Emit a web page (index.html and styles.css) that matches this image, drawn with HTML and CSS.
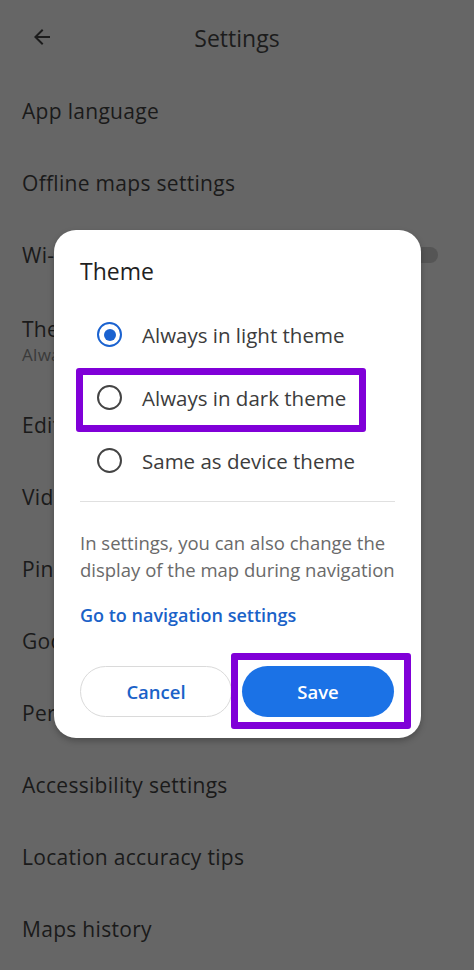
FILE: index.html
```html
<!DOCTYPE html>
<html>
<head>
<meta charset="utf-8">
<link rel="stylesheet" href="styles.css">
</head>
<body>
<div class="screen">
  <header class="topbar">
    <svg class="back" width="24" height="24" viewBox="0 0 24 24"><path d="M20 11H7.83l5.59-5.59L12 4l-8 8 8 8 1.41-1.41L7.83 13H20v-2z" fill="#1c1c1c"/></svg>
    <div class="title">Settings</div>
  </header>
  <ul class="list">
    <li class="row">App language</li>
    <li class="row">Offline maps settings</li>
    <li class="row switch-row"><span>Wi-Fi only</span><span class="track"></span></li>
    <li class="row two"><span>Theme</span><span class="sub">Always in light theme</span></li>
    <li class="row">Edit home or work</li>
    <li class="row">Video settings</li>
    <li class="row">Pinned trips</li>
    <li class="row">Google location settings</li>
    <li class="row">Personal content</li>
    <li class="row">Accessibility settings</li>
    <li class="row">Location accuracy tips</li>
    <li class="row">Maps history</li>
  </ul>

  <div class="dialog">
    <h2 class="d-title">Theme</h2>
    <div class="options">
      <div class="opt"><span class="radio on"></span><span>Always in light theme</span></div>
      <div class="opt"><span class="radio"></span><span>Always in dark theme</span></div>
      <div class="opt"><span class="radio"></span><span>Same as device theme</span></div>
    </div>
    <div class="divider"></div>
    <p class="note">In settings, you can also change the display of the map during navigation</p>
    <div class="link">Go to navigation settings</div>
    <div class="actions">
      <button class="btn cancel">Cancel</button>
      <button class="btn save">Save</button>
    </div>
    <div class="mark mark-dark"></div>
    <div class="mark mark-save"></div>
  </div>
</div>
</body>
</html>
```
FILE: styles.css
```css
* { box-sizing: border-box; }
html, body { margin: 0; padding: 0; }
body {
  background: #666666;
  font-family: "Open Sans", Roboto, "Noto Sans", Arial, sans-serif;
  width: 474px;
  height: 970px;
  overflow: hidden;
}
.screen { position: relative; width: 474px; height: 970px; }
.topbar {
  height: 75px;
  display: flex;
  align-items: center;
  justify-content: center;
  position: relative;
}
.back { position: absolute; left: 30px; top: 25px; }
.title { font-size: 23px; color: #1c1c1c; }
.list { list-style: none; margin: 0; padding: 0; }
.row {
  height: 72px;
  display: flex;
  align-items: center;
  padding-left: 22px;
  font-size: 21px;
  letter-spacing: 0.3px;
  color: #1a1a1a;
}
.switch-row { justify-content: space-between; padding-right: 36px; }
.track { width: 34px; height: 16px; border-radius: 8px; background: #555555; }
.two {
  height: 98px;
  flex-direction: column;
  align-items: flex-start;
  justify-content: center;
  gap: 0;
}
.sub { font-size: 17px; color: #3a3a3a; }

.dialog {
  position: absolute;
  left: 54px;
  top: 230px;
  width: 367px;
  height: 508px;
  background: #fff;
  border-radius: 22px;
  box-shadow: 0 3px 6px rgba(0,0,0,0.25);
  padding: 26px 26px 0 26px;
}
.d-title {
  margin: 0;
  font-weight: 400;
  font-size: 23px;
  color: #1f1f1f;
  line-height: 30px;
}
.options { margin-top: 17px; display: flex; flex-direction: column; }
.opt {
  height: 63px;
  display: flex;
  align-items: center;
  gap: 20px;
  padding-left: 17px;
  font-size: 20.5px;
  color: #3c3c3c;
}
.radio {
  width: 25px; height: 25px;
  border-radius: 50%;
  border: 2.5px solid #444;
  flex: none;
  display: flex;
  align-items: center;
  justify-content: center;
}
.radio.on { border-color: #1a62d0; }
.radio.on::after {
  content: "";
  width: 12px; height: 12px;
  border-radius: 50%;
  background: #1a62d0;
}
.divider { height: 1px; background: #e0e0e0; margin-top: 9px; }
.note {
  margin: 27px 0 0 0;
  font-size: 18.5px;
  line-height: 27px;
  color: #6a6a6a;
}
.link {
  margin-top: 20px;
  font-size: 18px;
  font-weight: 600;
  color: #1a62c8;
}
.actions { display: flex; gap: 10px; margin-top: 39px; }
.btn {
  width: 152px; height: 51px;
  border-radius: 26px;
  font-family: inherit;
  font-size: 18.5px;
  font-weight: 600;
}
.cancel { background: #fff; border: 1px solid #dadada; color: #1a62c8; }
.save { background: #1b72e6; border: none; color: #fff; }

.mark {
  position: absolute;
  border: 7px solid #8000d8;
  border-radius: 3px;
}
.mark-dark { left: 22px; top: 138px; width: 290px; height: 64px; }
.mark-save { left: 177px; top: 423px; width: 180px; height: 76px; }
```
